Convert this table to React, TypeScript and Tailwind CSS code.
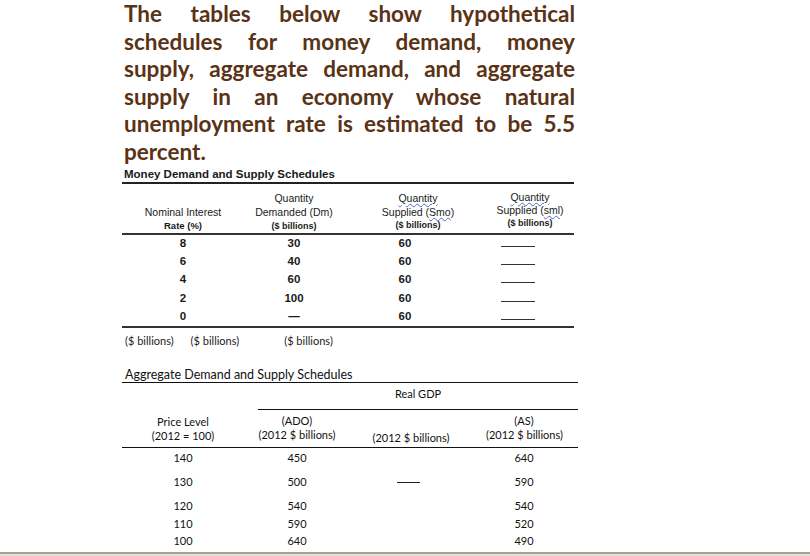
import React from 'react';

const introLines = [
  'The tables below show hypothetical',
  'schedules for money demand, money',
  'supply, aggregate demand, and aggregate',
  'supply in an economy whose natural',
  'unemployment rate is estimated to be 5.5',
];

const moneyRows = [
  { rate: '8', dm: '30', smo: '60', h: 'h-[18px]' },
  { rate: '6', dm: '40', smo: '60', h: 'h-[18px]' },
  { rate: '4', dm: '60', smo: '60', h: 'h-[18px]' },
  { rate: '2', dm: '100', smo: '60', h: 'h-[19px]' },
  { rate: '0', dm: '—', smo: '60', h: 'h-[18px]' },
];

const adasRows = [
  { p: '140', ad: '450', as: '640', h: 'h-[20px]', dash: false },
  { p: '130', ad: '500', as: '590', h: 'h-[29px]', dash: true },
  { p: '120', ad: '540', as: '540', h: 'h-[18px]', dash: false },
  { p: '110', ad: '590', as: '520', h: 'h-[18px]', dash: false },
  { p: '100', ad: '640', as: '490', h: 'h-[16px]', dash: false },
];

function Squiggle({ children }: { children: React.ReactNode }) {
  return (
    <span className="underline decoration-wavy decoration-[#5068c8] decoration-1 underline-offset-1">
      {children}
    </span>
  );
}

function MoneyTable() {
  return (
    <div className="w-[452px] font-['Liberation_Sans',Arial,sans-serif] text-[#1a1a1a]">
      <div className="mt-[2px] h-[17px] border-b-2 border-[#222] pl-[2px] text-[11.5px] font-bold leading-[15px]">
        Money Demand and Supply Schedules
      </div>

      {/* header */}
      <div className="grid grid-cols-[122px_100px_118px_112px] border-b-2 border-[#333] pt-[7px] text-[10.5px] leading-[14px]">
        <div className="text-center">
          <div className="h-[14px]" />
          <div>Nominal Interest</div>
          <div className="text-[9.5px] font-bold">Rate (%)</div>
        </div>
        <div className="text-center">
          <div>Quantity</div>
          <div>Demanded (Dm)</div>
          <div className="text-[9px] font-bold">($ billions)</div>
        </div>
        <div className="pl-[30px] text-center">
          <div>
            <Squiggle>Quantity</Squiggle>
          </div>
          <div>
            Supplied (<Squiggle>Smo</Squiggle>)
          </div>
          <div className="text-[9px] font-bold leading-[12px]">($ billions)</div>
        </div>
        <div className="pl-[24px] text-center">
          <div className="leading-[12px]">
            <Squiggle>Quantity</Squiggle>
          </div>
          <div>
            Supplied (<Squiggle>sml</Squiggle>)
          </div>
          <div className="text-[9px] font-bold leading-[12px]">($ billions)</div>
        </div>
      </div>

      {/* rows */}
      <div className="border-b-2 border-[#333] text-[11.5px] font-bold">
        {moneyRows.map((r) => (
          <div key={r.rate} className={`grid grid-cols-[122px_100px_118px_112px] items-center ${r.h}`}>
            <div className="text-center">{r.rate}</div>
            <div className="text-center">{r.dm}</div>
            <div className="pl-[4px] text-center">{r.smo}</div>
            <div className="flex justify-center pt-[5px]">
              <div className="h-px w-[34px] bg-[#333]" />
            </div>
          </div>
        ))}
      </div>

      <div className="mt-[6px] flex h-[14px] items-center font-['Lato',sans-serif] text-[11px] leading-[14px] text-[#222]">
        <span className="ml-[3px]">($ billions)</span>
        <span className="ml-[17px]">($ billions)</span>
        <span className="ml-[45px]">($ billions)</span>
      </div>
    </div>
  );
}

function AdasTable() {
  return (
    <div className="mt-[20px] w-[456px] font-['Lato',sans-serif] text-[11px] text-[#111]">
      <div className="h-[15px] border-b border-[#111] pl-[3px] text-[12.5px] leading-[14px]">
        Aggregate Demand and Supply Schedules
      </div>

      <div className="grid grid-cols-[136px_320px]">
        <div />
        <div className="h-[27px] border-b border-[#111] pt-[4px] text-center leading-[14px]">Real GDP</div>
      </div>

      <div className="grid h-[38px] grid-cols-[136px_78px_150px_92px] border-b border-[#111] pt-[5px] leading-[14px]">
        <div className="pr-[14px] text-center">
          <div>Price Level</div>
          <div>(2012 = 100)</div>
        </div>
        <div className="text-center">
          <div className="-mt-px">(ADO)</div>
          <div className="whitespace-nowrap">(2012 $ billions)</div>
        </div>
        <div className="pt-[16px] text-center">(2012 $ billions)</div>
        <div className="pr-[16px] text-center">
          <div className="-mt-px">(AS)</div>
          <div className="whitespace-nowrap">(2012 $ billions)</div>
        </div>
      </div>

      {adasRows.map((r) => (
        <div key={r.p} className={`grid grid-cols-[136px_78px_150px_92px] items-center ${r.h}`}>
          <div className="pr-[14px] text-center">{r.p}</div>
          <div className="text-center">{r.ad}</div>
          <div className="flex justify-center pr-[5px]">
            {r.dash && <div className="h-px w-[23px] bg-[#222]" />}
          </div>
          <div className="pr-[16px] text-center">{r.as}</div>
        </div>
      ))}
    </div>
  );
}

export default function App() {
  return (
    <div className="h-[556px] w-[810px] overflow-hidden bg-white">
      <div className="h-[552px] pl-[122px]">
        <div className="w-[453px] pl-[2px] font-['Lato',sans-serif] text-[22.5px] font-bold leading-[27.5px] text-[#5a3215]">
          {introLines.map((line) => (
            <div key={line} className="whitespace-nowrap text-justify [text-align-last:justify]">
              {line}
            </div>
          ))}
          <div>percent.</div>
        </div>
        <MoneyTable />
        <AdasTable />
      </div>
      <div className="h-[2px] w-full bg-[#a8a292]" />
      <div className="h-[2px] w-full bg-[#e4e1da]" />
    </div>
  );
}
